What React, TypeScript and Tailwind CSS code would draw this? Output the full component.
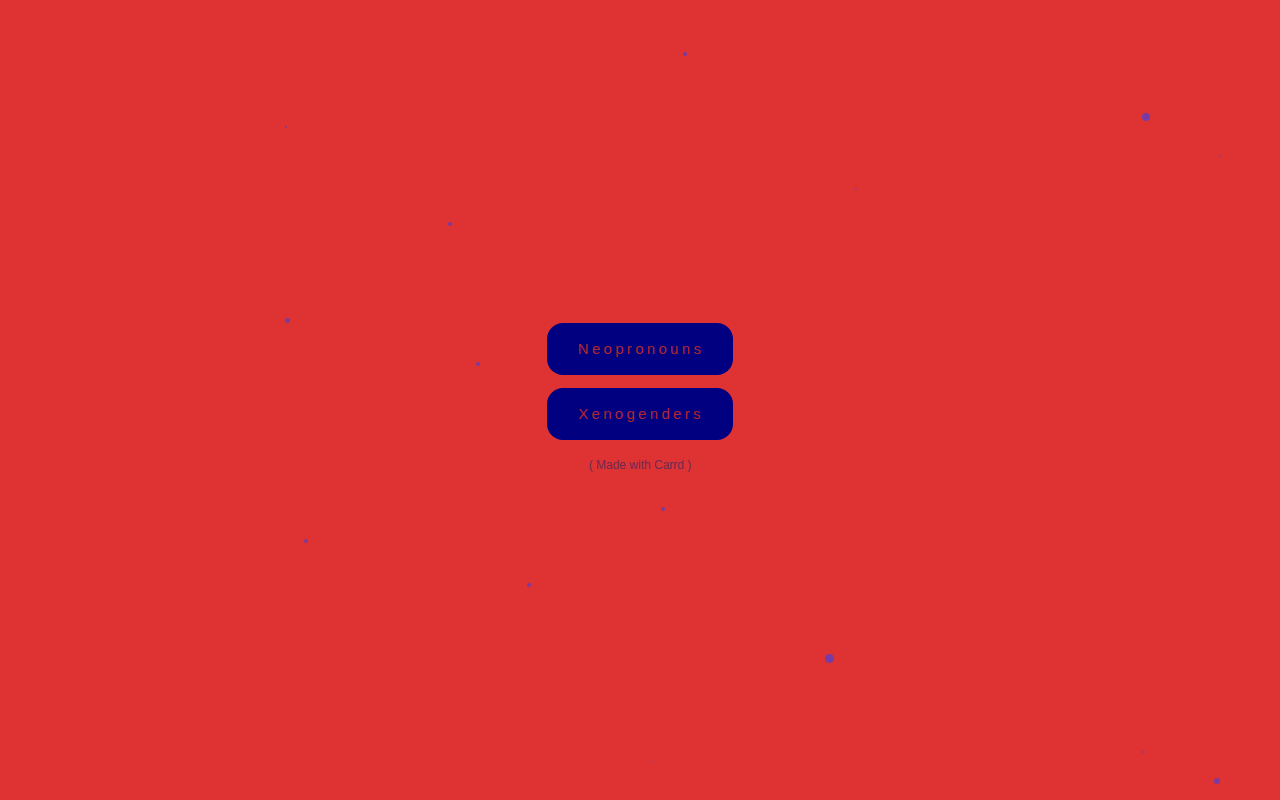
import React from "react";

const dots: { x: number; y: number; r: number; o: number }[] = [
  { x: 685, y: 54, r: 2, o: 0.9 },
  { x: 286, y: 127, r: 1.3, o: 0.8 },
  { x: 1146, y: 117, r: 4, o: 0.9 },
  { x: 1221, y: 156, r: 1.3, o: 0.6 },
  { x: 856, y: 189, r: 1.1, o: 0.7 },
  { x: 450, y: 224, r: 2, o: 0.85 },
  { x: 287, y: 320, r: 2.5, o: 0.85 },
  { x: 478, y: 364, r: 2.3, o: 0.85 },
  { x: 663, y: 509, r: 1.6, o: 0.85 },
  { x: 306, y: 541, r: 1.6, o: 0.85 },
  { x: 529, y: 585, r: 2.1, o: 0.85 },
  { x: 829, y: 658, r: 4.5, o: 0.9 },
  { x: 1143, y: 752, r: 1.1, o: 0.7 },
  { x: 1217, y: 781, r: 2.6, o: 0.85 },
  { x: 653, y: 762, r: 1, o: 0.35 },
];

export default function App() {
  return (
    <div
      className="relative w-full h-[800px] overflow-hidden bg-[#df3333] flex flex-col items-center justify-center"
      style={{ fontFamily: '"Liberation Sans", Arial, sans-serif' }}
    >
      {dots.map((d, i) => (
        <span
          key={i}
          className="absolute rounded-full bg-[#6a3cb4]"
          style={{
            left: d.x - d.r,
            top: d.y - d.r,
            width: d.r * 2,
            height: d.r * 2,
            opacity: d.o,
          }}
        />
      ))}
      <div className="relative flex flex-col items-center gap-[13px] pb-[4px]">
        <a className="w-[186px] h-[52px] rounded-[16px] bg-[#000080] flex items-center justify-center text-[15px] tracking-[0.22em] pl-[2px] pt-[2px] text-[#b3262f]">
          Neopronouns
        </a>
        <a className="w-[186px] h-[52px] rounded-[16px] bg-[#000080] flex items-center justify-center text-[15px] tracking-[0.22em] pl-[2px] pt-[2px] text-[#b3262f]">
          Xenogenders
        </a>
        <p className="mt-[3px] text-[12px] leading-[18px] text-[#6e2a52]">( Made with Carrd )</p>
      </div>
    </div>
  );
}
